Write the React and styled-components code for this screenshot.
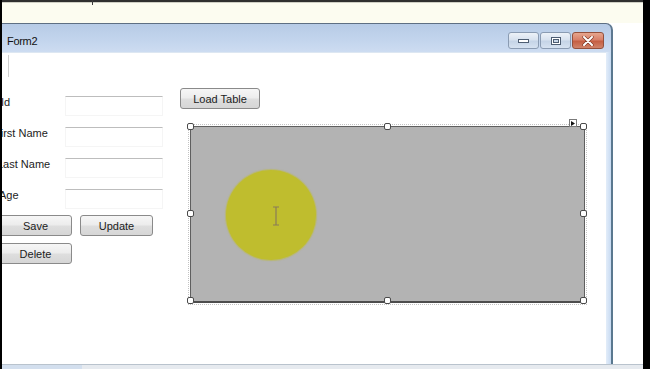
import React from 'react'
import styled, { createGlobalStyle } from 'styled-components'

const GlobalStyle = createGlobalStyle`
  html, body {
    margin: 0;
    padding: 0;
    background: #000;
  }
  body {
    font-family: "Liberation Sans", Arial, sans-serif;
  }
`;

const Screen = styled.div`
  width: 650px;
  height: 369px;
  background: #000;
  display: flex;
  padding-left: 2px;
  box-sizing: border-box;
  overflow: hidden;
`;

const Stage = styled.div`
  width: 641px;
  display: flex;
  flex-direction: column;
  background: #fff;
  overflow: hidden;
`;

const TopRule = styled.div`
  position: relative;
  height: 2px;
  background: #2f2f2f;
  border-bottom: 1px solid #cfcfc4;
  &::after {
    content: '';
    position: absolute;
    left: 90px;
    top: 0;
    width: 1px;
    height: 5px;
    background: #3a3a3a;
  }
`;

const CreamBand = styled.div`
  height: 20px;
  background: #fcfcf0;
`;

const Workspace = styled.div`
  flex: 1;
  display: flex;
  min-height: 0;
`;

const Window = styled.div`
  margin-left: -16px;
  width: 627px;
  flex-shrink: 0;
  display: flex;
  flex-direction: column;
`;

const TitleBar = styled.div`
  height: 29px;
  box-sizing: border-box;
  display: flex;
  align-items: flex-start;
  padding: 0 7px 0 21px;
  border-top: 1px solid #5e6f83;
  border-right: 2px solid #5d7890;
  border-top-right-radius: 7px;
  background: linear-gradient(#b7cbe6, #c3d5ed 60%, #cddcf1);
`;

const Title = styled.span`
  margin-top: 10px;
  font-size: 11px;
  line-height: 14px;
  letter-spacing: -0.3px;
  color: #111;
  flex: 1;
`;

const CaptionGroup = styled.div`
  display: flex;
  gap: 1px;
  margin-top: 8px;
`;

const CaptionButton = styled.div`
  width: ${p => p.$w}px;
  height: 17px;
  box-sizing: border-box;
  display: flex;
  align-items: center;
  justify-content: center;
  border: 1px solid ${p => (p.$close ? '#94503c' : '#8a9bb2')};
  border-radius: 3px;
  background: ${p =>
    p.$close
      ? 'linear-gradient(#e6a68e, #d8806a 45%, #c55f43 55%, #d0836a)'
      : 'linear-gradient(#edf2f8, #d8e2ef 45%, #c5d4e7 55%, #d6e2f1)'};
`;

const Body = styled.div`
  flex: 1;
  display: flex;
  min-height: 0;
`;

const Client = styled.div`
  flex: 1;
  display: flex;
  background: #fff;
  border-top: 1px solid #dde7f2;
  box-sizing: border-box;
  overflow: hidden;
`;

const RightFrame = styled.div`
  width: 7px;
  background: linear-gradient(to right, #e3edf9 0, #c7daf2 5px, #5a788f 5px);
`;

const LeftPanel = styled.div`
  width: 194px;
  flex-shrink: 0;
  display: flex;
  flex-direction: column;
`;

const Marker = styled.div`
  margin: 2px 0 0 22px;
  width: 1px;
  height: 22px;
  background: #cfcfcf;
`;

const Fields = styled.div`
  margin-top: 19px;
  display: flex;
  flex-direction: column;
  gap: 11px;
`;

const FieldRow = styled.div`
  display: grid;
  grid-template-columns: 79px 98px;
  height: 20px;
`;

const FieldLabel = styled.span`
  padding-left: ${p => p.$indent}px;
  font-size: 11px;
  line-height: 13px;
  color: #1c1c1c;
  white-space: nowrap;
`;

const TextBox = styled.div`
  height: 20px;
  box-sizing: border-box;
  border: 1px solid #f5f5f5;
  border-top-color: #bdbdbd;
  background: #fff;
`;

const ButtonRow = styled.div`
  display: flex;
  gap: 8px;
  margin: ${p => p.$top}px 0 0 13px;
`;

const FormButton = styled.div`
  width: ${p => p.$w || 73}px;
  height: 21px;
  box-sizing: border-box;
  display: flex;
  align-items: center;
  justify-content: center;
  border: 1px solid #8a8a8a;
  border-radius: 3px;
  background: linear-gradient(#f6f6f6, #ececec 48%, #dedede 52%, #d6d6d6);
  font-size: 11px;
  color: #1c1c1c;
`;

const RightPanel = styled.div`
  display: flex;
  flex-direction: column;
  padding-top: 35px;
`;

const Grid = styled.div`
  position: relative;
  margin: 17px 0 0 10px;
  width: 395px;
  height: 177px;
  box-sizing: border-box;
  background: #b3b3b3;
  border: 1px solid #5f5f5f;
  border-bottom: 2px solid #4d4d4d;
  outline: 1px dotted #c4c4c4;
  outline-offset: 1px;
`;

const Handle = styled.span`
  position: absolute;
  left: calc(${p => p.$x} - 4px);
  top: calc(${p => p.$y} - 4px);
  width: 7px;
  height: 7px;
  box-sizing: border-box;
  background: #fff;
  border: 1px solid #4a4a4a;
  border-radius: 2px;
`;

const SmartTag = styled.span`
  position: absolute;
  right: 7px;
  top: -8px;
  width: 8px;
  height: 8px;
  box-sizing: border-box;
  background: #fff;
  border: 1px solid #7a7a7a;
  display: flex;
  align-items: center;
  justify-content: center;
`;

const CursorSpot = styled.div`
  position: absolute;
  left: 35px;
  top: 43px;
  width: 90px;
  height: 90px;
  border-radius: 50%;
  background: #bfbd2e;
  box-shadow: 0 0 1px 1px rgba(191, 189, 46, 0.5);
`;

const BottomBar = styled.div`
  height: 5px;
  box-sizing: border-box;
  border-top: 1px solid #b9c3cd;
  background: linear-gradient(to right, #d3dfee 0, #d3dfee 80px, #e6eaef 80px);
`;

const handles = [
  ['0%', '0%'], ['50%', '0%'], ['100%', '0%'],
  ['0%', '50%'], ['100%', '50%'],
  ['0%', '100%'], ['50%', '100%'], ['100%', '100%'],
];

const fields = [
  { label: 'Id', indent: 15 },
  { label: 'First Name', indent: 8 },
  { label: 'Last Name', indent: 11 },
  { label: 'Age', indent: 13 },
];

const App = () => {
  return <Screen>
    <GlobalStyle />
    <Stage>
      <TopRule />
      <CreamBand />
      <Workspace>
        <Window>
          <TitleBar>
            <Title>Form2</Title>
            <CaptionGroup>
              <CaptionButton $w={31}>
                <svg width="11" height="4" viewBox="0 0 11 4">
                  <rect x="0.5" y="0.5" width="10" height="3" fill="#fff" stroke="#4d5d72" />
                </svg>
              </CaptionButton>
              <CaptionButton $w={31}>
                <svg width="10" height="8" viewBox="0 0 10 8">
                  <rect x="0.5" y="0.5" width="9" height="7" fill="#fff" stroke="#4d5d72" />
                  <rect x="2.5" y="2.5" width="5" height="3" fill="#c9d7e8" stroke="#4d5d72" />
                </svg>
              </CaptionButton>
              <CaptionButton $w={32} $close>
                <svg width="12" height="10" viewBox="0 0 12 10">
                  <path d="M2 1 L10 9 M10 1 L2 9" stroke="#7a3422" strokeWidth="3.2" strokeLinecap="round" />
                  <path d="M2 1 L10 9 M10 1 L2 9" stroke="#fff" strokeWidth="2" strokeLinecap="round" />
                </svg>
              </CaptionButton>
            </CaptionGroup>
          </TitleBar>
          <Body>
            <Client>
              <LeftPanel>
                <Marker />
                <Fields>
                  {fields.map(f => (
                    <FieldRow key={f.label}>
                      <FieldLabel $indent={f.indent}>{f.label}</FieldLabel>
                      <TextBox />
                    </FieldRow>
                  ))}
                </Fields>
                <ButtonRow $top={6}>
                  <FormButton>Save</FormButton>
                  <FormButton>Update</FormButton>
                </ButtonRow>
                <ButtonRow $top={7}>
                  <FormButton>Delete</FormButton>
                </ButtonRow>
              </LeftPanel>
              <RightPanel>
                <FormButton $w={80}>Load Table</FormButton>
                <Grid>
                  <CursorSpot>
                    <svg width="90" height="90" viewBox="0 0 90 90">
                      <path d="M47 37 H53 M50 37 V55 M47 55 H53" stroke="#8a7c58" strokeWidth="1.2" fill="none" />
                    </svg>
                  </CursorSpot>
                  {handles.map(([x, y]) => <Handle key={x + y} $x={x} $y={y} />)}
                  <SmartTag>
                    <svg width="4" height="5" viewBox="0 0 4 5">
                      <path d="M0 0 L4 2.5 L0 5 Z" fill="#111" />
                    </svg>
                  </SmartTag>
                </Grid>
              </RightPanel>
            </Client>
            <RightFrame />
          </Body>
        </Window>
      </Workspace>
      <BottomBar />
    </Stage>
  </Screen>
}

export default App
